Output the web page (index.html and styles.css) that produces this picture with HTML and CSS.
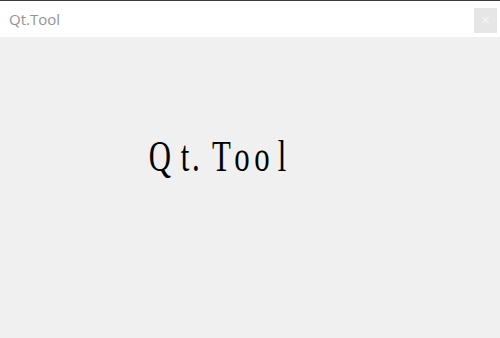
FILE: index.html
```html
<!DOCTYPE html>
<html>
<head>
<meta charset="utf-8">
<link rel="stylesheet" href="styles.css">
</head>
<body>
<div class="window">
  <div class="titlebar">
    <span class="title">Qt.Tool</span>
    <button class="close" aria-label="close">×</button>
  </div>
  <div class="content">
    <div class="label" aria-label="Qt.Tool"><span class="ch"><span class="g">Q</span></span><span class="ch right"><span class="g">t</span></span><span class="ch dot"><span class="g">.</span></span><span class="ch"><span class="g">T</span></span><span class="ch"><span class="g">o</span></span><span class="ch"><span class="g">o</span></span><span class="ch"><span class="g">l</span></span></div>
  </div>
</div>
</body>
</html>
```

FILE: styles.css
```css
html, body {
  margin: 0;
  padding: 0;
  width: 500px;
  height: 338px;
  overflow: hidden;
}
.window {
  width: 500px;
  height: 338px;
  display: flex;
  flex-direction: column;
  background: #f0f0f0;
}
.titlebar {
  height: 36px;
  border-top: 1px solid #3c3c3c;
  background: #ffffff;
  display: flex;
  align-items: center;
  justify-content: space-between;
  padding: 0 3px 0 9px;
  box-sizing: content-box;
}
.title {
  font-family: "Open Sans", "Noto Sans", sans-serif;
  font-size: 15px;
  color: #939393;
}
.close {
  align-self: flex-start;
  width: 23px;
  height: 25px;
  margin-top: 7px;
  border: none;
  background: #e6e6e6;
  color: #f8f8f8;
  font-family: "DejaVu Sans", sans-serif;
  font-size: 12px;
  line-height: 25px;
  padding: 0;
}
.content {
  flex: 1;
  padding: 98px 0 0 150px;
}
.label {
  display: flex;
  font-family: "Liberation Serif", serif;
  font-size: 44px;
  line-height: 44px;
  color: #000;
}
.ch {
  width: 20.4px;
  display: flex;
  justify-content: center;
  box-sizing: border-box;
}
.ch.right {
  justify-content: flex-end;
  padding-right: 2px;
}
.ch.dot {
  justify-content: flex-start;
  padding-left: 1px;
}
.g {
  display: inline-block;
  transform: scaleX(0.7);
}
.ch.right .g {
  transform-origin: right center;
}
.ch.dot .g {
  transform-origin: left center;
}
```
